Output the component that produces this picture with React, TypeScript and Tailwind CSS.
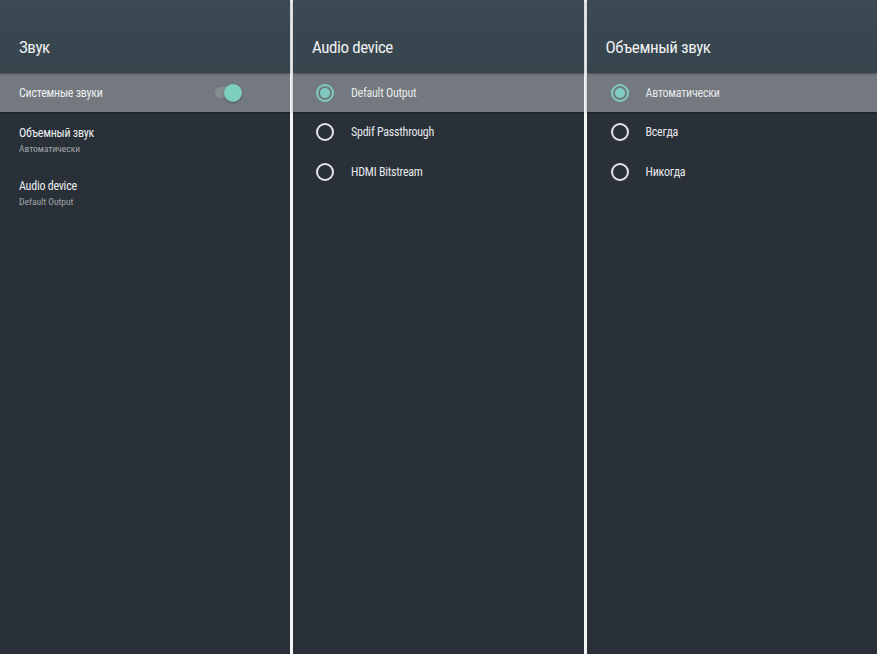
import React from "react";

const font = { fontFamily: "'Roboto Condensed', Roboto, 'Noto Sans', sans-serif" };

function Radio({ checked }: { checked?: boolean }) {
  if (checked) {
    return (
      <span className="flex h-[18px] w-[18px] items-center justify-center rounded-full border-2 border-[#7fcbbf]">
        <span className="h-[10px] w-[10px] rounded-full bg-[#7fcbbf]" />
      </span>
    );
  }
  return <span className="h-[18px] w-[18px] rounded-full border-2 border-[#e4e6e8]" />;
}

function Header({ title }: { title: string }) {
  return (
    <div className="relative z-10 h-[73px] bg-gradient-to-b from-[#3b4a53] to-[#36444c] px-[19px] pt-[37px] shadow-[0_1px_2px_rgba(0,0,0,0.35)]">
      <div className="text-[17px] leading-[20px] tracking-[-0.025em] text-[#eef0f1]">{title}</div>
    </div>
  );
}

function RadioPanel({ title, options, offset }: { title: string; options: string[]; offset: string }) {
  return (
    <div className="flex h-full flex-1 flex-col bg-[#293038]">
      <Header title={title} />
      {options.map((o, i) => (
        <div
          key={o}
          className={`flex items-center ${i === 0 ? "h-[39px] bg-[#73797e] shadow-[0_1px_2px_rgba(0,0,0,0.4)]" : "h-[40px]"} ${offset}`}
        >
          <Radio checked={i === 0} />
          <span className="ml-[17px] text-[12px] tracking-[-0.02em] text-[#e6e8ea]">{o}</span>
        </div>
      ))}
    </div>
  );
}

export default function App() {
  return (
    <div className="flex h-[654px] w-[877px] overflow-hidden" style={font}>
      <div className="flex h-full w-[290px] flex-col bg-[#293038]">
        <Header title="Звук" />
        <div className="flex h-[39px] items-center justify-between bg-[#73797e] pl-[19px] pr-[48px] shadow-[0_1px_2px_rgba(0,0,0,0.4)]">
          <span className="text-[12px] tracking-[-0.02em] text-[#eceef0]">Системные звуки</span>
          <span className="relative flex h-[18px] w-[27px] items-center">
            <span className="h-[11px] w-[25px] rounded-full bg-[#858c8f]" />
            <span className="absolute right-0 top-0 h-[18px] w-[18px] rounded-full bg-[#7fcfc1] shadow-[0_1px_2px_rgba(0,0,0,0.35)]" />
          </span>
        </div>
        <div className="flex flex-col px-[19px] pt-[13px] pb-[9px]">
          <span className="text-[12px] leading-[16px] tracking-[-0.02em] text-[#eceef0]">Объемный звук</span>
          <span className="mt-[1px] text-[9.5px] leading-[14px] text-[#a2a7ab]">Автоматически</span>
        </div>
        <div className="flex flex-col px-[19px] pt-[13px] pb-[9px]">
          <span className="text-[12px] leading-[16px] tracking-[-0.02em] text-[#eceef0]">Audio device</span>
          <span className="mt-[1px] text-[9.5px] leading-[14px] text-[#a2a7ab]">Default Output</span>
        </div>
      </div>
      <div className="h-full w-[3px] bg-[#f2f4f6]" />
      <RadioPanel title="Audio device" options={["Default Output", "Spdif Passthrough", "HDMI Bitstream"]} offset="pl-[23px]" />
      <div className="h-full w-[3px] bg-[#f2f4f6]" />
      <RadioPanel title="Объемный звук" options={["Автоматически", "Всегда", "Никогда"]} offset="pl-[24px]" />
    </div>
  );
}
